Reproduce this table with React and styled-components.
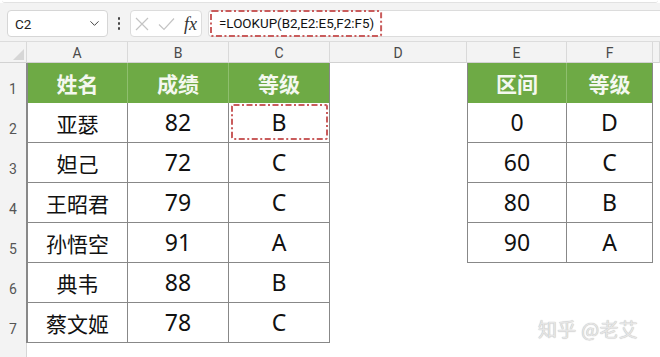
import React from "react";
import styled, { createGlobalStyle } from "styled-components";
import { ChevronDown } from "lucide-react";

const Global = createGlobalStyle`
  html, body { margin: 0; padding: 0; background: #ffffff; }
  body { width: 660px; height: 357px; overflow: hidden; font-family: "Noto Sans", "Noto Sans CJK SC", sans-serif; }
  * { box-sizing: border-box; }
`;

const Page = styled.div`
  position: relative;
  width: 660px;
  height: 357px;
  display: flex;
  flex-direction: column;
  background: #fff;
  overflow: hidden;
`;

const Ribbon = styled.div`
  flex-shrink: 0;
  height: 3px;
  background: #ffffff;
  border-bottom: 1px solid #e2e2e2;
  border-radius: 0 0 6px 6px;
  margin: 0 2px;
`;

const FormulaBar = styled.div`
  flex-shrink: 0;
  height: 39px;
  background: #f3f3f3;
  display: flex;
  align-items: flex-start;
  padding: 7px 0 0 7px;
  border-bottom: 1px solid #dcdcdc;
`;

const NameBox = styled.div`
  width: 101px;
  height: 27px;
  background: #fff;
  border: 1px solid #d6d6d6;
  border-radius: 4px;
  display: flex;
  align-items: center;
  justify-content: space-between;
  padding: 0 5px 0 7px;
  font-family: Roboto, "Noto Sans", sans-serif;
  font-size: 13.5px;
  color: #222;
`;

const Dots = styled.div`
  width: 22px;
  height: 27px;
  display: flex;
  flex-direction: column;
  align-items: center;
  justify-content: center;
  gap: 2.5px;
  span {
    width: 2.5px;
    height: 2.5px;
    border-radius: 50%;
    background: #444;
  }
`;

const ButtonGroup = styled.div`
  width: 72px;
  height: 27px;
  background: #fff;
  border: 1px solid #dcdcdc;
  border-radius: 4px;
  display: flex;
  align-items: center;
  padding: 0 3px 0 4px;
  gap: 9px;
  margin-right: 6px;
`;

const Icon = styled.svg`
  flex-shrink: 0;
  display: block;
`;

const Fx = styled.span`
  margin-left: auto;
  font-family: "Liberation Serif", "DejaVu Serif", serif;
  font-style: italic;
  font-size: 18px;
  color: #333;
  padding-right: 2px;
  line-height: 1;
`;

const FormulaInput = styled.div`
  flex: 1;
  height: 27px;
  background: #fff;
  border: 1px solid #dcdcdc;
  border-right: none;
  border-radius: 4px 0 0 4px;
  display: flex;
  align-items: center;
  padding-left: 1px;
`;

const DashWrap = styled.div`
  position: relative;
  height: 27px;
  display: flex;
  align-items: center;
  padding: 0 8px 0 9px;
  font-family: Roboto, "Noto Sans", sans-serif;
  font-size: 13.4px;
  color: #111;
`;

const DashSvg = styled.svg`
  position: absolute;
  inset: 0;
  width: 100%;
  height: 100%;
  overflow: visible;
  pointer-events: none;
`;

function DashRect() {
  return (
    <DashSvg preserveAspectRatio="none">
      <rect
        x="1"
        y="1"
        width="calc(100% - 2px)"
        height="calc(100% - 2px)"
        fill="none"
        stroke="#c95c5c"
        strokeWidth="2"
        strokeDasharray="6 2.5 2 2.5"
        rx="1.5"
      />
    </DashSvg>
  );
}

const Grid = styled.div`
  flex: 1;
  min-height: 0;
  overflow: hidden;
  display: grid;
  grid-template-columns: 27px 101px 101px 101px 137px 100px 86px 1fr;
  grid-template-rows: 21px repeat(7, 40px) 40px;
`;

const ColHead = styled.div`
  background: #f3f3f3;
  border-right: 1px solid #d9d9d9;
  border-bottom: 1px solid #d2d2d2;
  display: flex;
  align-items: center;
  justify-content: center;
  font-family: Roboto, "Noto Sans", sans-serif;
  font-size: 14px;
  color: #4a4a4a;
  padding-top: 1px;
`;

const Corner = styled.div`
  background: #f3f3f3;
  border-right: 1px solid #d9d9d9;
  border-bottom: 1px solid #d2d2d2;
  display: flex;
  align-items: flex-end;
  justify-content: flex-end;
  padding: 0 2px 2px 0;
  &::after {
    content: "";
    width: 0;
    height: 0;
    border-left: 11px solid transparent;
    border-bottom: 11px solid #d6d6d6;
  }
`;

const RowHead = styled.div`
  background: #f3f3f3;
  border-right: 1px solid ${(p) => (p.$table ? "#888" : "#d6d6d6")};
  display: flex;
  align-items: flex-end;
  justify-content: center;
  padding-bottom: 6px;
  font-family: Roboto, "Noto Sans", sans-serif;
  font-size: 14px;
  color: #555;
`;

const Cell = styled.div`
  position: relative;
  display: flex;
  align-items: center;
  justify-content: center;
  background: ${(p) => (p.$kind === "head" ? "#6eaa45" : "#fff")};
  color: ${(p) => (p.$kind === "head" ? "#f4f8ef" : "#111")};
  font-family: "Noto Sans CJK SC", "Noto Sans", sans-serif;
  font-weight: ${(p) => (p.$kind === "head" ? 700 : 400)};
  font-size: 21px;
  border-left: ${(p) => (p.$left ? "1px solid #888" : "none")};
  border-right: ${(p) =>
    p.$kind === "blank"
      ? "none"
      : p.$kind === "head" && !p.$last
      ? "1px solid #8fbf6e"
      : "1px solid #888"};
  border-bottom: ${(p) => (p.$kind === "body" ? "1px solid #888" : "none")};
`;

const Latin = styled.span`
  font-family: "Noto Sans", sans-serif;
  font-size: 23px;
  line-height: 1;
`;

const Selection = styled.div`
  position: absolute;
  top: 1px;
  left: 2px;
  right: 1px;
  bottom: 2px;
`;

const Watermark = styled.div`
  position: absolute;
  left: 538px;
  top: 315px;
  font-family: "Noto Sans CJK SC", sans-serif;
  font-size: 19px;
  color: #e6e6e6;
  letter-spacing: 0.3px;
  text-shadow: 0 0 1px #bcbcbc, 0 0 1px #cccccc;
  white-space: nowrap;
`;

const main = [
  ["亚瑟", "82", "B"],
  ["妲己", "72", "C"],
  ["王昭君", "79", "C"],
  ["孙悟空", "91", "A"],
  ["典韦", "88", "B"],
  ["蔡文姬", "78", "C"],
];
const side = [
  ["0", "D"],
  ["60", "C"],
  ["80", "B"],
  ["90", "A"],
];

export default function App() {
  const cols = ["A", "B", "C", "D", "E", "F", ""];
  const cells = [];
  cells.push(<Corner key="corner" />);
  cols.forEach((c, i) => cells.push(<ColHead key={"h" + i}>{c}</ColHead>));

  cells.push(<RowHead key="r1" $table>1</RowHead>);
  cells.push(<Cell key="1a" $kind="head" $left>姓名</Cell>);
  cells.push(<Cell key="1b" $kind="head">成绩</Cell>);
  cells.push(<Cell key="1c" $kind="head" $last>等级</Cell>);
  cells.push(<Cell key="1d" $kind="blank" />);
  cells.push(<Cell key="1e" $kind="head" $left>区间</Cell>);
  cells.push(<Cell key="1f" $kind="head" $last>等级</Cell>);
  cells.push(<Cell key="1g" $kind="blank" />);

  main.forEach((r, i) => {
    const n = i + 2;
    cells.push(<RowHead key={"r" + n} $table>{n}</RowHead>);
    cells.push(<Cell key={n + "a"} $kind="body" $left>{r[0]}</Cell>);
    cells.push(
      <Cell key={n + "b"} $kind="body"><Latin>{r[1]}</Latin></Cell>
    );
    cells.push(
      <Cell key={n + "c"} $kind="body">
        <Latin>{r[2]}</Latin>
        {n === 2 && (
          <Selection>
            <DashRect />
          </Selection>
        )}
      </Cell>
    );
    cells.push(<Cell key={n + "d"} $kind="blank" />);
    const s = side[i];
    if (s) {
      cells.push(<Cell key={n + "e"} $kind="body" $left><Latin>{s[0]}</Latin></Cell>);
      cells.push(<Cell key={n + "f"} $kind="body"><Latin>{s[1]}</Latin></Cell>);
    } else {
      cells.push(<Cell key={n + "e"} $kind="blank" />);
      cells.push(<Cell key={n + "f"} $kind="blank" />);
    }
    cells.push(<Cell key={n + "g"} $kind="blank" />);
  });

  cells.push(<RowHead key="r8" />);
  for (let i = 0; i < 7; i++) cells.push(<Cell key={"8" + i} $kind="blank" />);

  return (
    <Page>
      <Global />
      <Ribbon />
      <FormulaBar>
        <NameBox>
          <span>C2</span>
          <ChevronDown size={15} strokeWidth={1.6} color="#444" />
        </NameBox>
        <Dots>
          <span />
          <span />
          <span />
        </Dots>
        <ButtonGroup>
          <Icon width="14" height="14" viewBox="0 0 14 14">
            <path d="M1 1 L13 13 M13 1 L1 13" stroke="#c4c4c4" strokeWidth="1.2" fill="none" />
          </Icon>
          <Icon width="17" height="14" viewBox="0 0 17 14">
            <path d="M1 7.5 L6 12.5 L16 1.5" stroke="#c4c4c4" strokeWidth="1.2" fill="none" />
          </Icon>
          <Fx>fx</Fx>
        </ButtonGroup>
        <FormulaInput>
          <DashWrap>
            =LOOKUP(B2,E2:E5,F2:F5)
            <DashRect />
          </DashWrap>
        </FormulaInput>
      </FormulaBar>
      <Grid>{cells}</Grid>
      <Watermark>知乎 @老艾</Watermark>
    </Page>
  );
}
